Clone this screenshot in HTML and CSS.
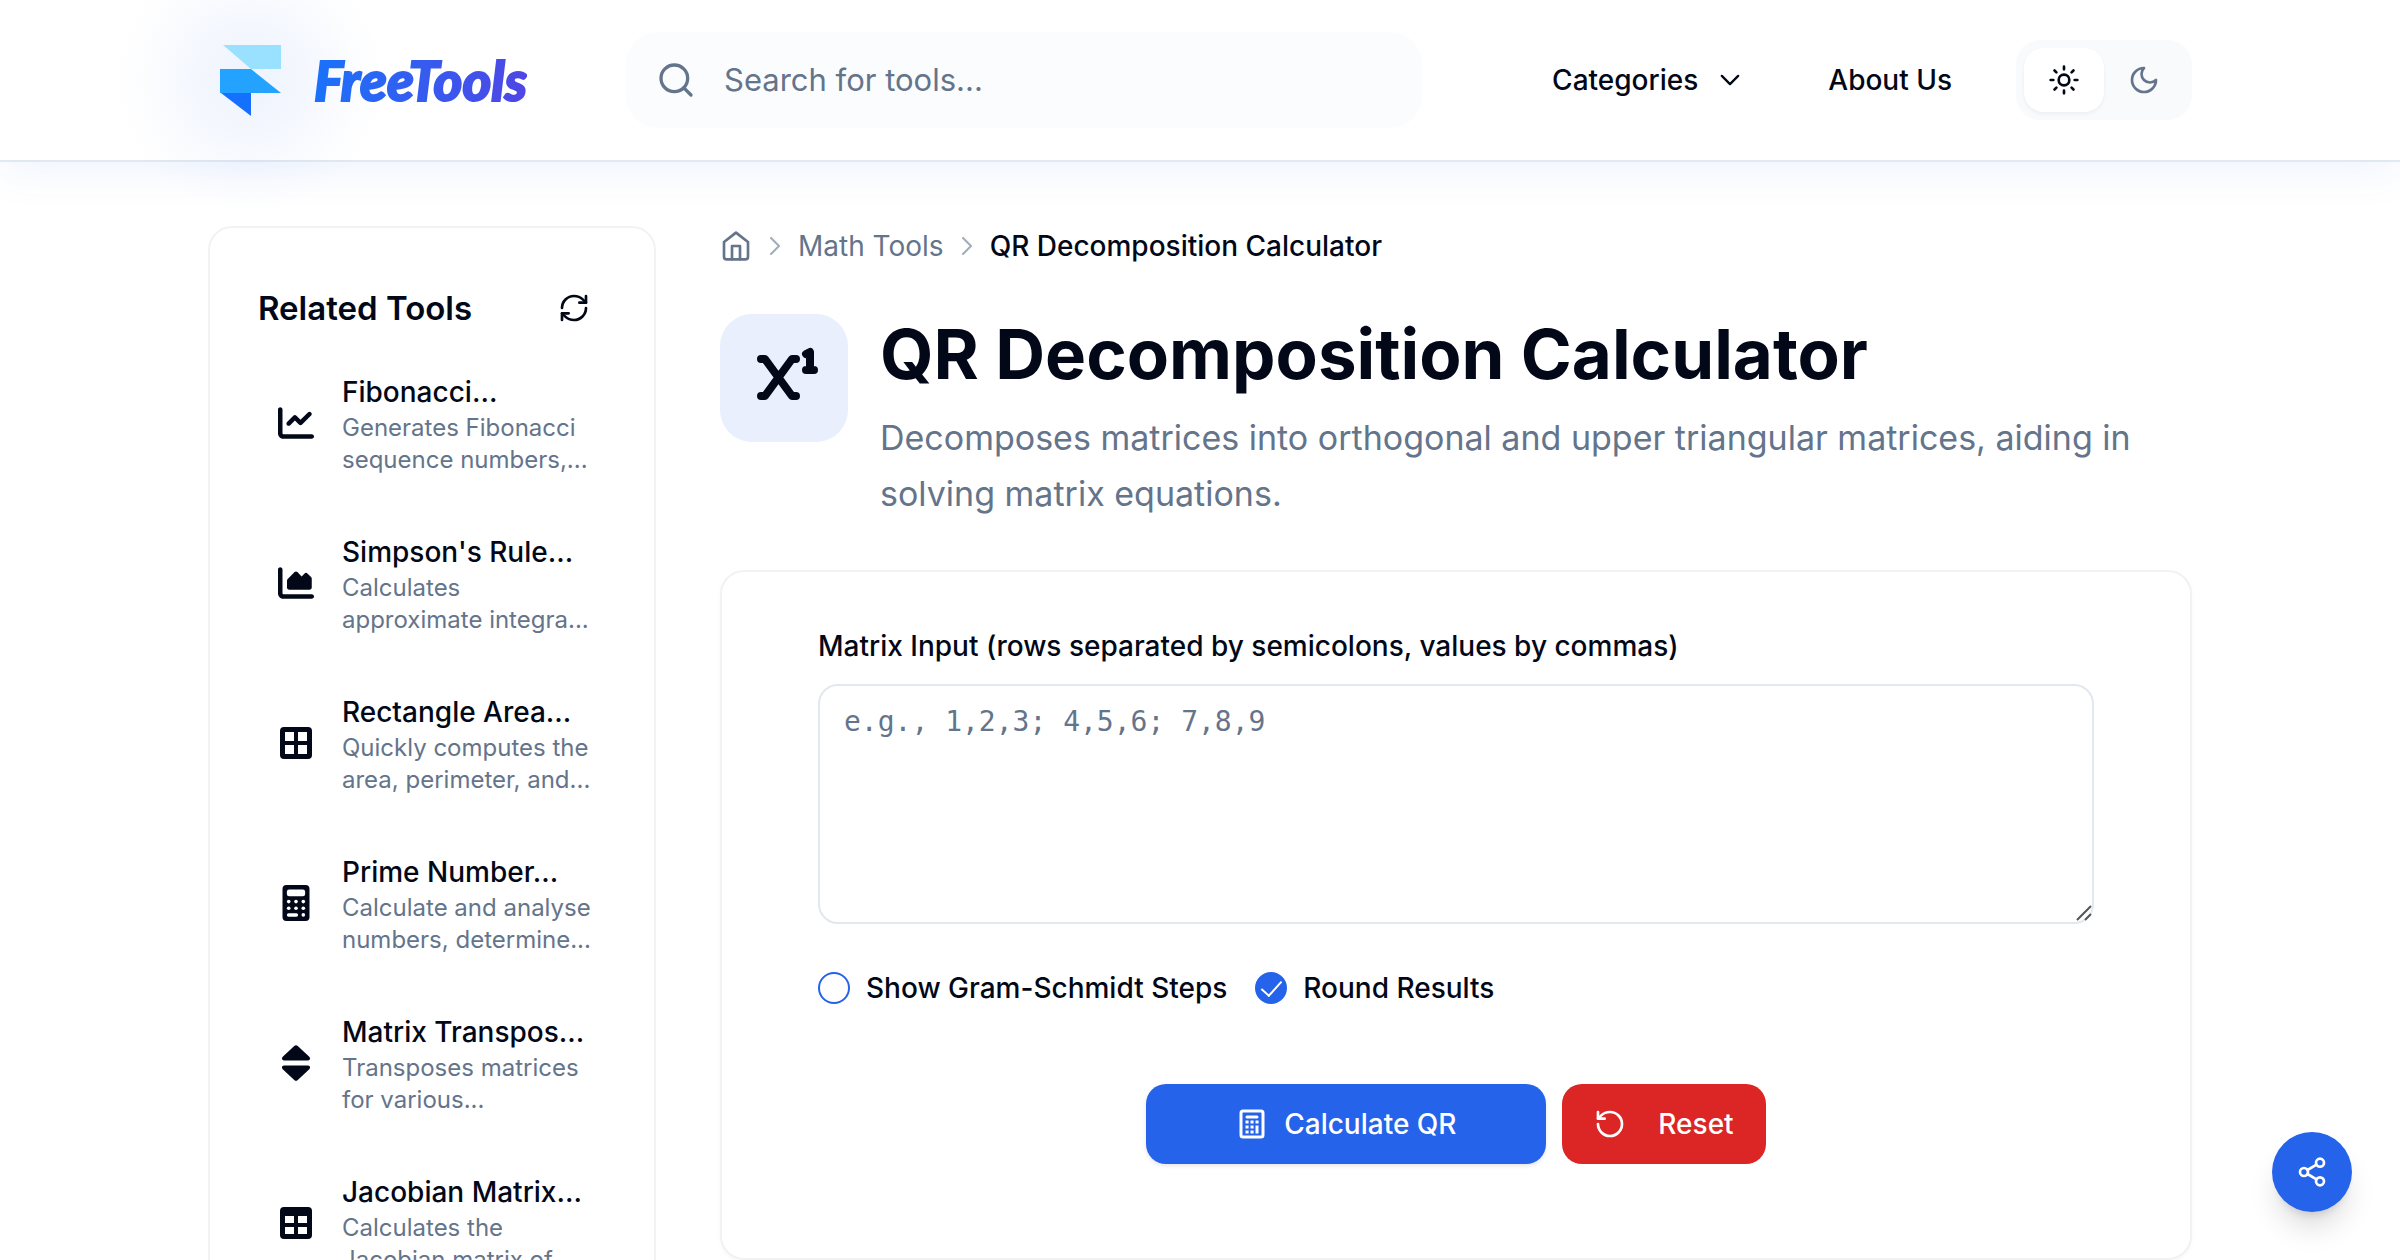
FILE: index.html
```html
<!DOCTYPE html>
<html lang="en">
<head>
    <meta charset="UTF-8">
    <meta name="viewport" content="width=device-width, initial-scale=1.0">
    <title>QR Decomposition Calculator - FreeTools</title>
    <link rel="stylesheet" href="styles.css">
</head>
<body>
    <header class="header">
        <div class="container header-inner">
            <a href="#" class="logo">
                <svg class="logo-mark" viewBox="0 0 62 72" aria-hidden="true">
                    <path d="M3 1H61V25H31Z" fill="#99e1ff"/>
                    <path d="M0 25H31L61 49H0Z" fill="#23a3ff"/>
                    <path d="M1 49H31V72Z" fill="#1670ff"/>
                </svg>
                <span class="logo-text">FreeTools</span>
            </a>

            <label class="search">
                <svg class="icon search-icon" viewBox="0 0 24 24" aria-hidden="true"><circle cx="11" cy="11" r="8"/><path d="m21 21-4.3-4.3"/></svg>
                <input class="search-input" type="search" placeholder="Search for tools..." aria-label="Search for tools">
            </label>

            <nav class="nav">
                <button class="nav-item" type="button">
                    Categories
                    <svg class="icon nav-chevron" viewBox="0 0 24 24" aria-hidden="true"><path d="m5 8.5 7 7 7-7"/></svg>
                </button>
                <a href="#" class="nav-item">About Us</a>
            </nav>

            <div class="theme-toggle">
                <button class="theme-btn active" type="button" aria-label="Light theme">
                    <svg class="icon theme-icon" viewBox="0 0 24 24" aria-hidden="true"><circle cx="12" cy="12" r="4"/><path d="M12 2v2M12 20v2M4.9 4.9l1.4 1.4M17.7 17.7l1.4 1.4M2 12h2M20 12h2M6.3 17.7l-1.4 1.4M19.1 4.9l-1.4 1.4"/></svg>
                </button>
                <button class="theme-btn" type="button" aria-label="Dark theme">
                    <svg class="icon theme-icon" viewBox="0 0 24 24" aria-hidden="true"><path d="M12 3a6 6 0 0 0 9 9 9 9 0 1 1-9-9Z"/></svg>
                </button>
            </div>
        </div>
    </header>

    <div class="container layout">
        <!-- Related tools -->
        <aside class="card sidebar">
            <div class="sidebar-head">
                <h2>Related Tools</h2>
                <button class="refresh" type="button" aria-label="Refresh">
                    <svg class="icon refresh-icon" viewBox="0 0 24 24" aria-hidden="true"><path d="M3 12a9 9 0 0 1 9-9 9.75 9.75 0 0 1 6.74 2.74L21 8"/><path d="M21 3v5h-5"/><path d="M21 12a9 9 0 0 1-9 9 9.75 9.75 0 0 1-6.74-2.74L3 16"/><path d="M8 16H3v5"/></svg>
                </button>
            </div>
            <ul class="tool-list">
                <li><a href="#" class="tool">
                    <svg class="tool-icon" viewBox="0 0 512 512" aria-hidden="true"><path d="M64 64c0-17.7-14.3-32-32-32S0 46.300 0 64V400c0 44.200 35.800 80 80 80H480c17.700 0 32-14.300 32-32s-14.300-32-32-32H80c-8.800 0-16-7.200-16-16V64zm406.600 86.600c12.500-12.500 12.500-32.800 0-45.300s-32.800-12.500-45.300 0L320 210.700l-57.400-57.400c-12.500-12.500-32.800-12.500-45.300 0l-88 88c-12.500 12.500-12.500 32.800 0 45.300s32.800 12.500 45.300 0L240 221.300l57.400 57.400c12.500 12.500 32.800 12.500 45.300 0l128-128z"/></svg>
                    <span class="tool-body"><strong>Fibonacci...</strong><span>Generates Fibonacci<br>sequence numbers,...</span></span>
                </a></li>
                <li><a href="#" class="tool">
                    <svg class="tool-icon" viewBox="0 0 512 512" aria-hidden="true"><path d="M64 64c0-17.7-14.3-32-32-32S0 46.300 0 64V400c0 44.200 35.800 80 80 80H480c17.700 0 32-14.300 32-32s-14.300-32-32-32H80c-8.800 0-16-7.200-16-16V64zm96 288H448c17.700 0 32-14.300 32-32V196c0-10-4-18-10-24l-52-52c-12-12-28-12-40 0l-42 42-60-62c-12-12-28-12-40 0l-98 100c-6 6-10 14-10 24v96c0 17.700 14.300 32 32 32z"/></svg>
                    <span class="tool-body"><strong>Simpson's Rule...</strong><span>Calculates<br>approximate integra...</span></span>
                </a></li>
                <li><a href="#" class="tool">
                    <svg class="tool-icon" viewBox="0 0 36 36" aria-hidden="true"><path fill-rule="evenodd" d="M6 2h24a4 4 0 0 1 4 4v24a4 4 0 0 1-4 4H6a4 4 0 0 1-4-4V6a4 4 0 0 1 4-4ZM7 7v9h9V7ZM20 7v9h9V7ZM7 20v9h9V20ZM20 20v9h9V20Z"/></svg>
                    <span class="tool-body"><strong>Rectangle Area...</strong><span>Quickly computes the<br>area, perimeter, and...</span></span>
                </a></li>
                <li><a href="#" class="tool">
                    <svg class="tool-icon" viewBox="0 0 384 512" aria-hidden="true">
                        <rect width="384" height="512" rx="56"/>
                        <g fill="#fff"><rect x="62" y="64" width="260" height="96" rx="32"/><circle cx="88" cy="236" r="26"/><circle cx="192" cy="236" r="26"/><circle cx="296" cy="236" r="26"/><circle cx="88" cy="330" r="26"/><circle cx="192" cy="330" r="26"/><circle cx="296" cy="330" r="26"/><rect x="62" y="400" width="160" height="50" rx="25"/><circle cx="296" cy="425" r="26"/></g>
                    </svg>
                    <span class="tool-body"><strong>Prime Number...</strong><span>Calculate and analyse<br>numbers, determine...</span></span>
                </a></li>
                <li><a href="#" class="tool">
                    <svg class="tool-icon" viewBox="0 0 36 36" aria-hidden="true"><path d="M16.500.8a2.500 2.500 0 0 1 3 0L31 11.500c2 2 .8 4-1 4H6c-1.800 0-3-2-1-4ZM6 20.500h24c1.800 0 3 2 1 4L19.500 35.200a2.500 2.500 0 0 1-3 0L5 24.500c-2-2-.8-4 1-4Z"/></svg>
                    <span class="tool-body"><strong>Matrix Transpos...</strong><span>Transposes matrices<br>for various...</span></span>
                </a></li>
                <li><a href="#" class="tool">
                    <svg class="tool-icon" viewBox="0 0 36 36" aria-hidden="true"><path fill-rule="evenodd" d="M6 2h24a4 4 0 0 1 4 4v24a4 4 0 0 1-4 4H6a4 4 0 0 1-4-4V6a4 4 0 0 1 4-4ZM7 11v7h9v-7ZM20 11v7h9v-7ZM7 22v7h9v-7ZM20 22v7h9v-7Z"/></svg>
                    <span class="tool-body"><strong>Jacobian Matrix...</strong><span>Calculates the<br>Jacobian matrix of...</span></span>
                </a></li>
            </ul>
        </aside>

        <main class="main">
            <nav class="breadcrumb" aria-label="Breadcrumb">
                <a href="#" aria-label="Home"><svg class="icon home-icon" viewBox="0 0 24 24" aria-hidden="true"><path d="m3 9 9-7 9 7v11a2 2 0 0 1-2 2H5a2 2 0 0 1-2-2z"/><path d="M9 22V12h6v10"/></svg></a>
                <svg class="icon crumb-sep" viewBox="0 0 12 24" aria-hidden="true"><path d="m2 4 8 8-8 8"/></svg>
                <a href="#">Math Tools</a>
                <svg class="icon crumb-sep" viewBox="0 0 12 24" aria-hidden="true"><path d="m2 4 8 8-8 8"/></svg>
                <span class="current">QR Decomposition Calculator</span>
            </nav>

            <div class="title-row">
                <div class="title-icon">
                    <svg viewBox="0 0 72 64" aria-hidden="true"><path d="M13 13h4l27 37h4M48 13h-4L17 50h-4M58 8l4-2v18M58 24h8"/></svg>
                </div>
                <div>
                    <h1>QR Decomposition Calculator</h1>
                    <p>Decomposes matrices into orthogonal and upper triangular matrices, aiding in solving matrix equations.</p>
                </div>
            </div>

            <form class="card calculator">
                <label class="field-label" for="matrix">Matrix Input (rows separated by semicolons, values by commas)</label>
                <div class="field">
                    <textarea id="matrix" placeholder="e.g., 1,2,3; 4,5,6; 7,8,9"></textarea>
                    <svg class="grip" viewBox="0 0 16 16" aria-hidden="true"><path d="M1 15 15 1M9 15l6-6"/></svg>
                </div>

                <div class="options">
                    <label class="option"><input type="checkbox"> Show Gram-Schmidt Steps</label>
                    <label class="option"><input type="checkbox" checked> Round Results</label>
                </div>

                <div class="actions">
                    <button class="btn btn-primary" type="button">
                        <svg class="icon btn-icon" viewBox="0 0 32 32" aria-hidden="true"><rect x="5" y="3" width="22" height="26" rx="2"/><path d="M11 9h10"/><path stroke-linecap="square" d="M11 14h.1M16 14h.1M21 14h.1M11 19h.1M16 19h.1M11 24h.1M16 24h.1M21 19v5"/></svg>
                        Calculate QR
                    </button>
                    <button class="btn btn-danger" type="reset">
                        <svg class="icon btn-icon" viewBox="0 0 24 24" aria-hidden="true"><path d="M3 12a9 9 0 1 0 9-9 9.750 9.750 0 0 0-6.740 2.740L3 8"/><path d="M3 3v5h5"/></svg>
                        Reset
                    </button>
                </div>
            </form>
        </main>
    </div>

    <button class="share" type="button" aria-label="Share">
        <svg class="icon share-icon" viewBox="0 0 24 24" aria-hidden="true"><circle cx="18" cy="5" r="3"/><circle cx="6" cy="12" r="3"/><circle cx="18" cy="19" r="3"/><path d="m8.600 13.500 6.800 4M15.400 6.500l-6.800 4"/></svg>
    </button>
</body>
</html>
```
FILE: styles.css
```css
:root {
    --text: #020817;
    --muted: #64748b;
    --border: #e2e8f0;
    --primary: #2563eb;
    --danger: #dc2626;
}

* {
    margin: 0;
    padding: 0;
    box-sizing: border-box;
}

body {
    font-family: Inter, "Liberation Sans", sans-serif;
    font-size: 28px;
    line-height: 40px;
    color: var(--text);
    background: #fff;
    overflow-x: hidden;
}

a {
    color: inherit;
    text-decoration: none;
}

button {
    font: inherit;
    color: inherit;
    border: none;
    background: none;
    cursor: pointer;
}

.icon {
    fill: none;
    stroke: currentColor;
    stroke-width: 2;
    stroke-linecap: round;
    stroke-linejoin: round;
    flex-shrink: 0;
}

.container {
    width: 100%;
    max-width: 2048px;
    margin: 0 auto;
    padding: 0 32px;
}

.card {
    border: 2px solid #f2f2f3;
    border-radius: 24px;
    background: #fff;
}

/* Header */
.header {
    border-bottom: 2px solid #e0e8f1;
    box-shadow: 0 8px 40px rgba(37, 99, 235, 0.08);
}

.header-inner {
    display: flex;
    align-items: center;
    height: 160px;
}

.logo {
    position: relative;
    display: flex;
    align-items: center;
    gap: 32px;
    width: 418px;
    padding-left: 12px;
}

/* Soft glow behind the mark */
.logo::before {
    content: "";
    position: absolute;
    left: -93px;
    top: 50%;
    width: 270px;
    height: 270px;
    transform: translateY(-50%);
    background: radial-gradient(closest-side, rgba(37, 99, 235, 0.08), rgba(37, 99, 235, 0.05) 40%, rgba(37, 99, 235, 0.01) 80%, transparent);
    pointer-events: none;
}

.logo-mark {
    position: relative;
    width: 62px;
    height: 72px;
}

.logo-text {
    font-family: Lato, sans-serif;
    font-size: 55px;
    line-height: 60px;
    font-weight: 900;
    font-style: italic;
    background: linear-gradient(to right, #1a72fb, #4f46e5);
    -webkit-background-clip: text;
    background-clip: text;
    color: transparent;
    -webkit-text-stroke: 2px transparent;
}

.search {
    display: flex;
    align-items: center;
    gap: 28px;
    width: 796px;
    height: 96px;
    padding: 0 32px 0 30px;
    border-radius: 32px;
    background: #fafcfe;
    color: var(--muted);
}

.search-icon {
    width: 40px;
    height: 40px;
}

.search-input {
    flex: 1;
    min-width: 0;
    border: none;
    outline: none;
    background: none;
    font: inherit;
    font-size: 31px;
    color: var(--text);
}

.search-input::placeholder {
    color: var(--muted);
}

.nav {
    display: flex;
    flex: 1;
    justify-content: flex-end;
    gap: 84px;
    margin-right: 64px;
    font-weight: 500;
}

.nav-item {
    display: flex;
    align-items: center;
    gap: 18px;
}

.nav-chevron {
    width: 28px;
    height: 28px;
}

.theme-toggle {
    display: flex;
    padding: 8px;
    border-radius: 24px;
    background: #f8fafc;
    color: var(--muted);
}

.theme-btn {
    display: flex;
    align-items: center;
    justify-content: center;
    width: 80px;
    height: 64px;
    border-radius: 20px;
}

.theme-btn.active {
    background: #fff;
    color: var(--text);
    box-shadow: 0 2px 4px rgba(0, 0, 0, 0.05);
}

.theme-icon {
    width: 32px;
    height: 32px;
}

/* Page layout */
.layout {
    display: flex;
    align-items: flex-start;
    gap: 64px;
    padding-top: 64px;
}

/* Sidebar */
.sidebar {
    flex: 0 0 448px;
    min-width: 0;
    padding: 48px;
}

.sidebar-head {
    display: flex;
    align-items: center;
    justify-content: space-between;
    height: 64px;
    margin-bottom: 8px;
}

.sidebar-head h2 {
    font-size: 33px;
    font-weight: 600;
}

.refresh {
    display: flex;
    padding: 16px;
}

.refresh-icon {
    width: 32px;
    height: 32px;
}

.tool-list {
    display: flex;
    flex-direction: column;
    gap: 8px;
    list-style: none;
}

.tool {
    display: flex;
    align-items: center;
    gap: 24px;
    padding: 24px 16px;
}

.tool-icon {
    flex-shrink: 0;
    width: 44px;
    height: 36px;
    margin-bottom: 2px;
    fill: var(--text);
}

.tool-body {
    white-space: nowrap;
}

.tool-body strong {
    display: block;
    font-weight: 500;
}

.tool-body span {
    display: block;
    font-size: 24px;
    line-height: 32px;
    color: var(--muted);
}

/* Main column */
.main {
    flex: 1;
    min-width: 0;
}

.breadcrumb {
    display: flex;
    align-items: center;
    gap: 17px;
    color: var(--muted);
}

.breadcrumb a {
    display: flex;
}

.home-icon {
    width: 32px;
    height: 32px;
}

.crumb-sep {
    width: 12px;
    height: 24px;
    opacity: 0.6;
}

.current {
    color: var(--text);
    font-weight: 500;
}

.title-row {
    display: flex;
    gap: 32px;
    margin: 48px 0;
}

.title-icon {
    display: flex;
    align-items: center;
    justify-content: center;
    flex-shrink: 0;
    width: 128px;
    height: 128px;
    border-radius: 32px;
    background: #e9effd;
}

.title-icon svg {
    width: 72px;
    height: 64px;
    fill: none;
    stroke: var(--text);
    stroke-width: 8;
    stroke-linecap: round;
    stroke-linejoin: round;
}

.title-row h1 {
    font-size: 69px;
    line-height: 80px;
    font-weight: 700;
    margin-bottom: 16px;
}

.title-row p {
    font-size: 34px;
    line-height: 56px;
    color: var(--muted);
}

/* Calculator form */
.calculator {
    padding: 54px 96px 94px;
    box-shadow: 0 2px 4px rgba(0, 0, 0, 0.03);
}

.field-label {
    display: block;
    margin-bottom: 18px;
    font-weight: 500;
}

.field {
    position: relative;
    display: flex;
}

.field textarea {
    width: 100%;
    height: 240px;
    padding: 16px 24px;
    border: 2px solid var(--border);
    border-radius: 20px;
    outline: none;
    resize: none;
    font: 28px/40px "DejaVu Sans Mono", monospace;
    color: var(--text);
}

.field textarea::placeholder {
    color: var(--muted);
}

.grip {
    position: absolute;
    right: 2px;
    bottom: 3px;
    width: 16px;
    height: 16px;
    stroke: #555;
    stroke-width: 2;
}

.options {
    display: flex;
    gap: 28px;
    margin: 44px 0 76px;
    font-weight: 500;
}

.option {
    display: flex;
    align-items: center;
    gap: 16px;
}

.option input {
    appearance: none;
    width: 32px;
    height: 32px;
    border: 2px solid var(--primary);
    border-radius: 50%;
    display: grid;
    place-items: center;
}

.option input:checked {
    background: var(--primary);
}

.option input:checked::after {
    content: "";
    width: 9px;
    height: 18px;
    border: solid #fff;
    border-width: 0 2px 2px 0;
    transform: translateY(-2px) rotate(42deg);
}

.actions {
    display: flex;
    justify-content: center;
    gap: 16px;
}

.btn {
    display: flex;
    align-items: center;
    justify-content: center;
    height: 80px;
    border-radius: 20px;
    color: #fff;
    font-weight: 500;
}

.btn-primary {
    gap: 16px;
    width: 400px;
    background: var(--primary);
    box-shadow: 0 2px 4px rgba(0, 0, 0, 0.1);
}

.btn-danger {
    gap: 32px;
    padding: 0 32px;
    background: var(--danger);
}

.btn-icon {
    width: 32px;
    height: 32px;
}

.btn-primary .btn-icon {
    stroke-width: 3;
}

/* Floating share button */
.share {
    position: fixed;
    right: 48px;
    bottom: 48px;
    display: flex;
    align-items: center;
    justify-content: center;
    width: 80px;
    height: 80px;
    border-radius: 50%;
    background: var(--primary);
    color: #fff;
    box-shadow: 0 20px 30px -6px rgba(0, 0, 0, 0.15), 0 8px 12px -8px rgba(0, 0, 0, 0.2);
}

.share-icon {
    width: 32px;
    height: 32px;
}
```
